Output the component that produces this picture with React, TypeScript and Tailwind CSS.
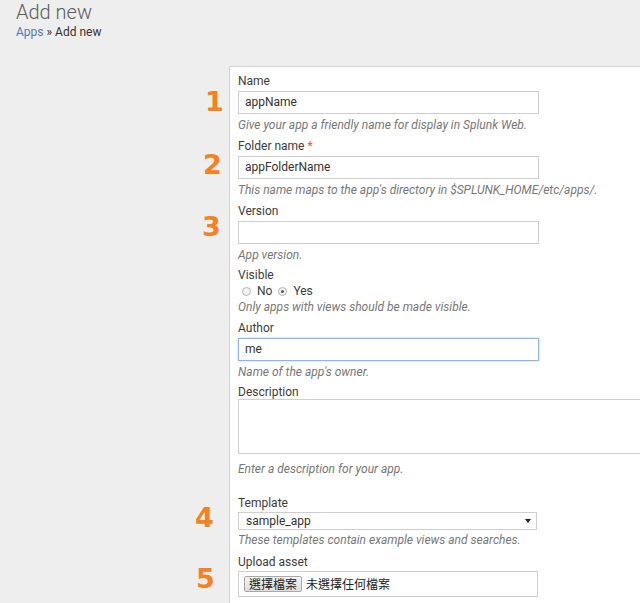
import React from "react";

const labelCls = "block text-[12px] leading-[16px] text-[#3c3c3c]";
const helpCls = "text-[12px] leading-[16px] italic text-[#777]";
const inputCls =
  "h-[23px] w-[301px] border border-[#cfcfcf] bg-white px-[6px] text-[12px] leading-[21px] text-[#333]";

function Field({
  label,
  value,
  help,
  required,
  mb = "mb-[5px]",
}: {
  label: string;
  value: string;
  help: string;
  required?: boolean;
  mb?: string;
}) {
  return (
    <div className={mb}>
      <div className={`${labelCls} mb-[2px]`}>
        {label}
        {required && <span className="text-[#d6563c]"> *</span>}
      </div>
      <div className={inputCls}>{value}</div>
      <div className={`${helpCls} mt-[3px]`}>{help}</div>
    </div>
  );
}

function Radio({ checked, label }: { checked?: boolean; label: string }) {
  return (
    <span className="flex items-center gap-[6px]">
      <span className="flex h-[9px] w-[9px] items-center justify-center rounded-full border border-[#b5b5b5] bg-[#f3f3f3]">
        {checked && <span className="h-[3px] w-[3px] rounded-full bg-[#555]" />}
      </span>
      <span>{label}</span>
    </span>
  );
}

// orange step annotations drawn over the gray margin
const steps = [
  { n: "1", top: "top-[88px]", left: "left-[205px]" },
  { n: "2", top: "top-[151px]", left: "left-[203px]" },
  { n: "3", top: "top-[213px]", left: "left-[202px]" },
  { n: "4", top: "top-[504px]", left: "left-[195px]" },
  { n: "5", top: "top-[565px]", left: "left-[196px]" },
];

export default function App() {
  return (
    <div className="relative h-[603px] w-full overflow-hidden bg-[#eeeeee] font-['Roboto',sans-serif]">
      {/* Header */}
      <div className="px-4">
        <h1 className="text-[20px] font-light leading-[24px] text-[#5c5c5c]">Add new</h1>
        <div className="text-[12px] leading-[16px] text-[#333]">
          <span className="text-[#5379af]">Apps</span> » Add new
        </div>
      </div>

      {/* Form panel */}
      <div className="ml-[229px] mt-[26px] h-[600px] border-l border-t border-[#d3d3d3] bg-white px-2 pt-[6px]">
        <Field label="Name" value="appName" help="Give your app a friendly name for display in Splunk Web." />
        <Field
          label="Folder name"
          required
          value="appFolderName"
          help="This name maps to the app's directory in $SPLUNK_HOME/etc/apps/."
        />
        <Field label="Version" value="" help="App version." mb="mb-[4px]" />

        <div className="mb-[5px]">
          <div className={labelCls}>Visible</div>
          <div className="flex h-[16px] items-center gap-[6px] pl-[4px] text-[12px] text-[#3c3c3c]">
            <Radio label="No" />
            <Radio checked label="Yes" />
          </div>
          <div className={helpCls}>Only apps with views should be made visible.</div>
        </div>

        <div className="mb-[5px]">
          <div className={`${labelCls} mb-[2px]`}>Author</div>
          <div className="h-[23px] w-[301px] border border-[#8db6e6] bg-white px-[6px] text-[12px] leading-[21px] text-[#333] shadow-[0_0_2px_rgba(82,148,226,0.45)]">
            me
          </div>
          <div className={`${helpCls} mt-[3px]`}>Name of the app's owner.</div>
        </div>

        <div>
          <div className="text-[12px] leading-[14px] text-[#3c3c3c]">Description</div>
          <div className="h-[55px] w-[440px] border border-[#cfcfcf] bg-white" />
          <div className={`${helpCls} mt-[7px]`}>Enter a description for your app.</div>
        </div>

        <div className="mt-[18px]">
          <div className={labelCls}>Template</div>
          <div className="mt-[1px] flex h-[18px] w-[299px] items-center justify-between border border-[#cfcfcf] bg-white pl-[7px] pr-[5px] text-[12px] text-[#333]">
            <span>sample_app</span>
            <svg width="6" height="4" viewBox="0 0 6 4">
              <path d="M0 0H6L3 4Z" fill="#222" />
            </svg>
          </div>
          <div className={`${helpCls} mt-[2px]`}>These templates contain example views and searches.</div>
        </div>

        <div className="mt-[6px]">
          <div className={labelCls}>Upload asset</div>
          <div className="mt-[1px] flex h-[26px] w-[300px] items-center gap-[4px] border border-[#cfcfcf] bg-white pl-[5px] font-['Noto_Sans_CJK_TC',sans-serif] text-[12px] text-[#222]">
            <span className="flex h-[16px] items-center rounded-[2px] border border-[#a8a8a8] bg-gradient-to-b from-[#f4f4f4] to-[#dedede] px-[4px] leading-none">
              選擇檔案
            </span>
            <span>未選擇任何檔案</span>
          </div>
        </div>
      </div>

      {steps.map((s) => (
        <span
          key={s.n}
          className={`absolute ${s.top} ${s.left} font-['DejaVu_Sans',sans-serif] text-[27px] font-bold leading-none text-[#f58220]`}
        >
          {s.n}
        </span>
      ))}
    </div>
  );
}
